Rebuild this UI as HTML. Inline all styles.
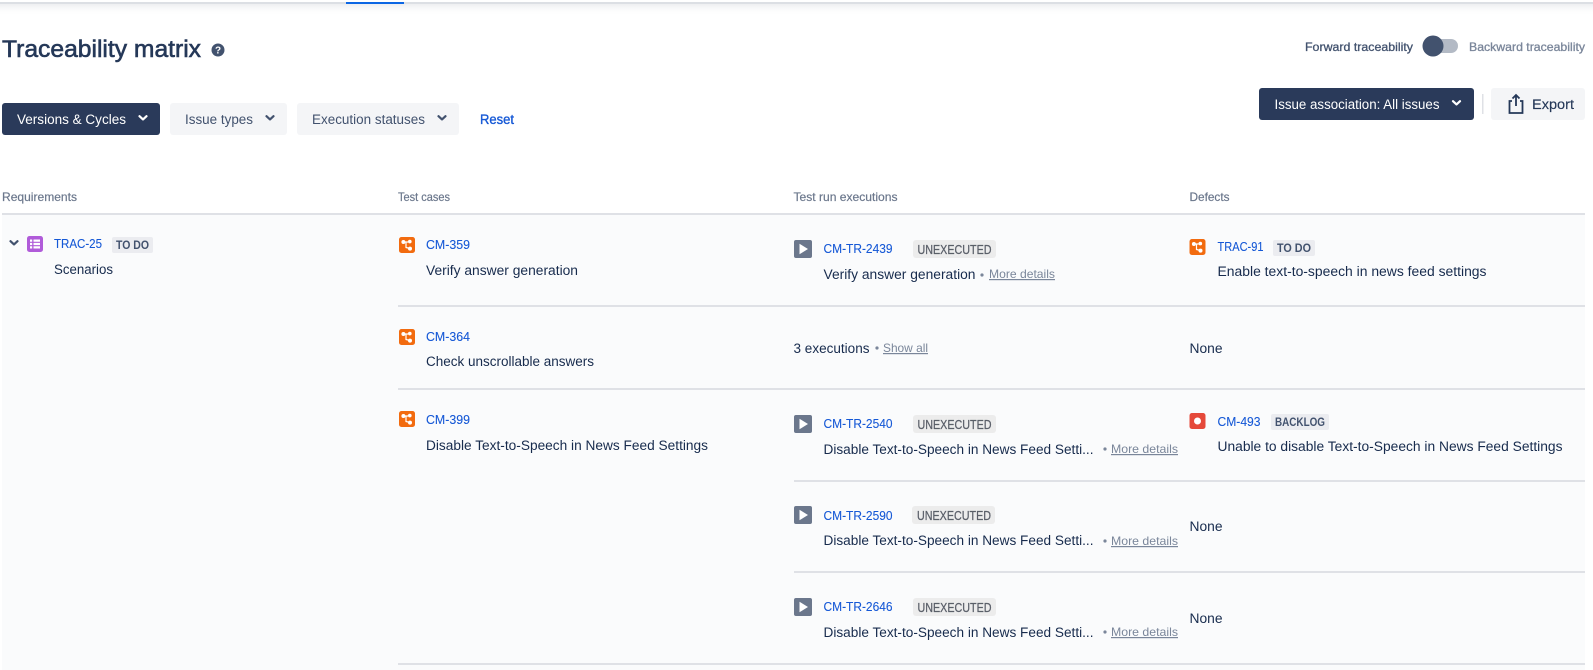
<!DOCTYPE html>
<html lang="en">
<head>
<meta charset="utf-8">
<title>Traceability matrix</title>
<style>
html,body{margin:0;padding:0;background:#fff;width:1593px;height:670px;overflow:hidden}
svg{display:block}
text{font-family:"Liberation Sans",sans-serif;white-space:pre}
.h{font-size:12px;fill:#6b778c;stroke:#6b778c;stroke-width:.2}
.l{font-size:13px;fill:#1558d6;stroke:#1558d6;stroke-width:.1}
.d{font-size:13.5px;fill:#172b4d}
.b{font-size:11.5px;font-weight:bold;fill:#42526e}
.u{font-size:12.5px;fill:#5a5f69;stroke:#5a5f69;stroke-width:.25}
.m{font-size:12px;fill:#7a869a;text-decoration:underline}
.f{font-size:13.5px;fill:#42526e}
</style>
</head>
<body>
<svg width="1593" height="670" viewBox="0 0 1593 670" xmlns="http://www.w3.org/2000/svg">
<defs>
<linearGradient id="sh" x1="0" y1="0" x2="0" y2="1"><stop offset="0" stop-color="#dfe1e6" stop-opacity=".55"/><stop offset="1" stop-color="#fff" stop-opacity="0"/></linearGradient>
<symbol id="tc" viewBox="0 0 16 16"><rect width="16" height="16" rx="2.5" fill="#f26b0f"/><path d="M4.5 5H9M7 5V10.5L11 11.5" fill="none" stroke="#fff" stroke-width="1.2"/><circle cx="4.4" cy="5" r="2" fill="#fff"/><circle cx="10.8" cy="4.6" r="1.8" fill="#fff"/><circle cx="11" cy="11.6" r="2" fill="#fff"/></symbol>
<symbol id="pl" viewBox="0 0 18 18"><rect width="18" height="18" rx="2" fill="#6b778c"/><path d="M5.5 3.800L14 9L5.500 14.200Z" fill="#fff"/></symbol>
<symbol id="ch" viewBox="0 0 10 6"><path d="M1.500 1.200L5 4.400L8.500 1.200" fill="none" stroke="currentColor" stroke-width="2.200" stroke-linecap="round" stroke-linejoin="round"/></symbol>
</defs>

<!-- top bar -->
<rect x="0" y="4" width="1593" height="12" fill="url(#sh)"/>
<rect x="0" y="2" width="1593" height="2" fill="#dcdfe4"/>
<rect x="346" y="2" width="58" height="2" fill="#0c66e4"/>

<!-- title -->
<text x="2" y="57" font-size="24" fill="#253858" stroke="#253858" stroke-width=".6" textLength="199" lengthAdjust="spacingAndGlyphs">Traceability matrix</text>
<circle cx="218" cy="50" r="6.500" fill="#42526e"/>
<text x="218" y="53.500" font-size="10" font-weight="bold" fill="#fff" text-anchor="middle">?</text>

<!-- toggle -->
<text x="1305" y="51" font-size="12" fill="#42526e" stroke="#42526e" stroke-width=".3" textLength="108" lengthAdjust="spacingAndGlyphs">Forward traceability</text>
<rect x="1428" y="39" width="30" height="14" rx="7" fill="#b3bac5"/>
<circle cx="1433" cy="46" r="10.500" fill="#42526e"/>
<text x="1469" y="51" font-size="12" fill="#7a869a" stroke="#7a869a" stroke-width=".3" textLength="116" lengthAdjust="spacingAndGlyphs">Backward traceability</text>

<!-- right buttons -->
<rect x="1259" y="88" width="215" height="32" rx="3" fill="#2a3a5a"/>
<text x="1274.500" y="109" font-size="13.5" fill="#fff" textLength="165" lengthAdjust="spacingAndGlyphs">Issue association: All issues</text>
<use href="#ch" x="1451.500" y="100" width="10" height="6" color="#fff"/>
<rect x="1482" y="94" width="1.500" height="20" fill="#dfe1e6"/>
<rect x="1491" y="88" width="94" height="32" rx="3" fill="#f4f5f7"/>
<path d="M1512 101H1509.500V113H1522.500V101H1520M1516 106V95.500M1512.500 98.500L1516 95L1519.500 98.500" fill="none" stroke="#253858" stroke-width="1.800"/>
<text x="1532" y="109" font-size="13.5" fill="#253858" stroke="#253858" stroke-width=".15" textLength="42" lengthAdjust="spacingAndGlyphs">Export</text>

<!-- filters -->
<rect x="2" y="103" width="158" height="32" rx="3" fill="#2a3a5a"/>
<text x="17" y="124" font-size="13.5" fill="#fff" textLength="109" lengthAdjust="spacingAndGlyphs">Versions &amp; Cycles</text>
<use href="#ch" x="138" y="115" width="10" height="6" color="#fff"/>
<rect x="170" y="103" width="117" height="32" rx="3" fill="#f4f5f7"/>
<text x="185" y="124" class="f" textLength="68" lengthAdjust="spacingAndGlyphs">Issue types</text>
<use href="#ch" x="265" y="115" width="10" height="6" color="#42526e"/>
<rect x="297" y="103" width="162" height="32" rx="3" fill="#f4f5f7"/>
<text x="312" y="124" class="f" textLength="113" lengthAdjust="spacingAndGlyphs">Execution statuses</text>
<use href="#ch" x="437" y="115" width="10" height="6" color="#42526e"/>
<text x="480" y="124" font-size="13.500" fill="#1558d6" stroke="#1558d6" stroke-width=".35" textLength="34" lengthAdjust="spacingAndGlyphs">Reset</text>

<!-- table header -->
<text x="2" y="201" class="h" textLength="75" lengthAdjust="spacingAndGlyphs">Requirements</text>
<text x="398" y="201" class="h" textLength="52" lengthAdjust="spacingAndGlyphs">Test cases</text>
<text x="793.500" y="201" class="h" textLength="104" lengthAdjust="spacingAndGlyphs">Test run executions</text>
<text x="1189.500" y="201" class="h" textLength="40" lengthAdjust="spacingAndGlyphs">Defects</text>

<!-- table body -->
<rect x="2" y="213" width="1583" height="457" fill="#fafbfc"/>
<rect x="2" y="213" width="1583" height="2" fill="#dfe1e6"/>
<rect x="398" y="305" width="1187" height="2" fill="#dfe1e6"/>
<rect x="398" y="388" width="1187" height="2" fill="#dfe1e6"/>
<rect x="794" y="480" width="791" height="2" fill="#dfe1e6"/>
<rect x="794" y="571" width="791" height="2" fill="#dfe1e6"/>
<rect x="398" y="663" width="1187" height="2" fill="#dfe1e6"/>

<!-- requirement -->
<use href="#ch" x="9" y="240" width="10" height="6" color="#42526e"/>
<rect x="27" y="236" width="16" height="16" rx="2.500" fill="#b05bd9"/>
<path d="M30 239.500h2.200v2.200h-2.200zM33.500 239.500h6.500v2.200h-6.500zM30 242.900h2.200v2.200h-2.200zM33.500 242.900h6.500v2.200h-6.500zM30 246.300h2.200v2.200h-2.200zM33.500 246.300h6.500v2.200h-6.500z" fill="#fff"/>
<text x="54" y="248" class="l" textLength="48" lengthAdjust="spacingAndGlyphs">TRAC-25</text>
<rect x="112" y="237" width="41" height="16" rx="2" fill="#ebecf0"/>
<text x="116" y="249" class="b" textLength="33" lengthAdjust="spacingAndGlyphs">TO DO</text>
<text x="54" y="274" class="d" textLength="59" lengthAdjust="spacingAndGlyphs">Scenarios</text>

<!-- test cases -->
<use href="#tc" x="399" y="237" width="16" height="16"/>
<text x="426" y="249" class="l" textLength="44" lengthAdjust="spacingAndGlyphs">CM-359</text>
<text x="426" y="275" class="d" textLength="152" lengthAdjust="spacingAndGlyphs">Verify answer generation</text>

<use href="#tc" x="399" y="329" width="16" height="16"/>
<text x="426" y="341" class="l" textLength="44" lengthAdjust="spacingAndGlyphs">CM-364</text>
<text x="426" y="366" class="d" textLength="168" lengthAdjust="spacingAndGlyphs">Check unscrollable answers</text>

<use href="#tc" x="399" y="411" width="16" height="16"/>
<text x="426" y="424" class="l" textLength="44" lengthAdjust="spacingAndGlyphs">CM-399</text>
<text x="426" y="450" class="d" textLength="282" lengthAdjust="spacingAndGlyphs">Disable Text-to-Speech in News Feed Settings</text>

<!-- executions -->
<use href="#pl" x="794" y="240" width="18" height="18"/>
<text x="823.500" y="253" class="l" textLength="69" lengthAdjust="spacingAndGlyphs">CM-TR-2439</text>
<rect x="913" y="240" width="83" height="18" rx="3" fill="#ececec"/>
<text x="917.500" y="254" class="u" textLength="74" lengthAdjust="spacingAndGlyphs">UNEXECUTED</text>
<text x="823.500" y="279" class="d" textLength="152" lengthAdjust="spacingAndGlyphs">Verify answer generation</text>
<circle cx="982" cy="275" r="1.600" fill="#7a869a"/>
<text x="989" y="278" class="m" textLength="66" lengthAdjust="spacingAndGlyphs">More details</text>

<text x="793.500" y="353" class="d" textLength="76" lengthAdjust="spacingAndGlyphs">3 executions</text>
<circle cx="877" cy="348" r="1.600" fill="#7a869a"/>
<text x="883" y="352" class="m" textLength="45" lengthAdjust="spacingAndGlyphs">Show all</text>

<use href="#pl" x="794" y="415" width="18" height="18"/>
<text x="823.500" y="428" class="l" textLength="69" lengthAdjust="spacingAndGlyphs">CM-TR-2540</text>
<rect x="913" y="415" width="83" height="18" rx="3" fill="#ececec"/>
<text x="917.500" y="429" class="u" textLength="74" lengthAdjust="spacingAndGlyphs">UNEXECUTED</text>
<text x="823.500" y="454" class="d" textLength="270" lengthAdjust="spacingAndGlyphs">Disable Text-to-Speech in News Feed Setti...</text>
<circle cx="1105" cy="449" r="1.600" fill="#7a869a"/>
<text x="1111" y="453" class="m" textLength="67" lengthAdjust="spacingAndGlyphs">More details</text>

<use href="#pl" x="794" y="506" width="18" height="18"/>
<text x="823.500" y="520" class="l" textLength="69" lengthAdjust="spacingAndGlyphs">CM-TR-2590</text>
<rect x="912" y="506" width="83" height="18" rx="3" fill="#ececec"/>
<text x="917" y="520" class="u" textLength="74" lengthAdjust="spacingAndGlyphs">UNEXECUTED</text>
<text x="823.500" y="545" class="d" textLength="270" lengthAdjust="spacingAndGlyphs">Disable Text-to-Speech in News Feed Setti...</text>
<circle cx="1105" cy="541" r="1.600" fill="#7a869a"/>
<text x="1111" y="545" class="m" textLength="67" lengthAdjust="spacingAndGlyphs">More details</text>

<use href="#pl" x="794" y="598" width="18" height="18"/>
<text x="823.500" y="611" class="l" textLength="69" lengthAdjust="spacingAndGlyphs">CM-TR-2646</text>
<rect x="913" y="598" width="83" height="18" rx="3" fill="#ececec"/>
<text x="917.500" y="612" class="u" textLength="74" lengthAdjust="spacingAndGlyphs">UNEXECUTED</text>
<text x="823.500" y="637" class="d" textLength="270" lengthAdjust="spacingAndGlyphs">Disable Text-to-Speech in News Feed Setti...</text>
<circle cx="1105" cy="632" r="1.600" fill="#7a869a"/>
<text x="1111" y="636" class="m" textLength="67" lengthAdjust="spacingAndGlyphs">More details</text>

<!-- defects -->
<use href="#tc" x="1189.500" y="239" width="16" height="16"/>
<text x="1217.500" y="251" class="l" textLength="46" lengthAdjust="spacingAndGlyphs">TRAC-91</text>
<rect x="1273" y="240" width="42" height="16" rx="2" fill="#ebecf0"/>
<text x="1277" y="252" class="b" textLength="34" lengthAdjust="spacingAndGlyphs">TO DO</text>
<text x="1217.500" y="276" class="d" textLength="269" lengthAdjust="spacingAndGlyphs">Enable text-to-speech in news feed settings</text>

<text x="1189.500" y="353" class="d" textLength="33" lengthAdjust="spacingAndGlyphs">None</text>

<rect x="1189.500" y="413" width="16" height="16" rx="2.500" fill="#e5493a"/>
<circle cx="1197.500" cy="421" r="3.500" fill="#fff"/>
<text x="1217.500" y="426" class="l" textLength="43" lengthAdjust="spacingAndGlyphs">CM-493</text>
<rect x="1271" y="414" width="58" height="16" rx="2" fill="#ebecf0"/>
<text x="1275" y="426" class="b" textLength="50" lengthAdjust="spacingAndGlyphs">BACKLOG</text>
<text x="1217.500" y="451" class="d" textLength="345" lengthAdjust="spacingAndGlyphs">Unable to disable Text-to-Speech in News Feed Settings</text>

<text x="1189.500" y="531" class="d" textLength="33" lengthAdjust="spacingAndGlyphs">None</text>
<text x="1189.500" y="623" class="d" textLength="33" lengthAdjust="spacingAndGlyphs">None</text>
</svg>
</body>
</html>
